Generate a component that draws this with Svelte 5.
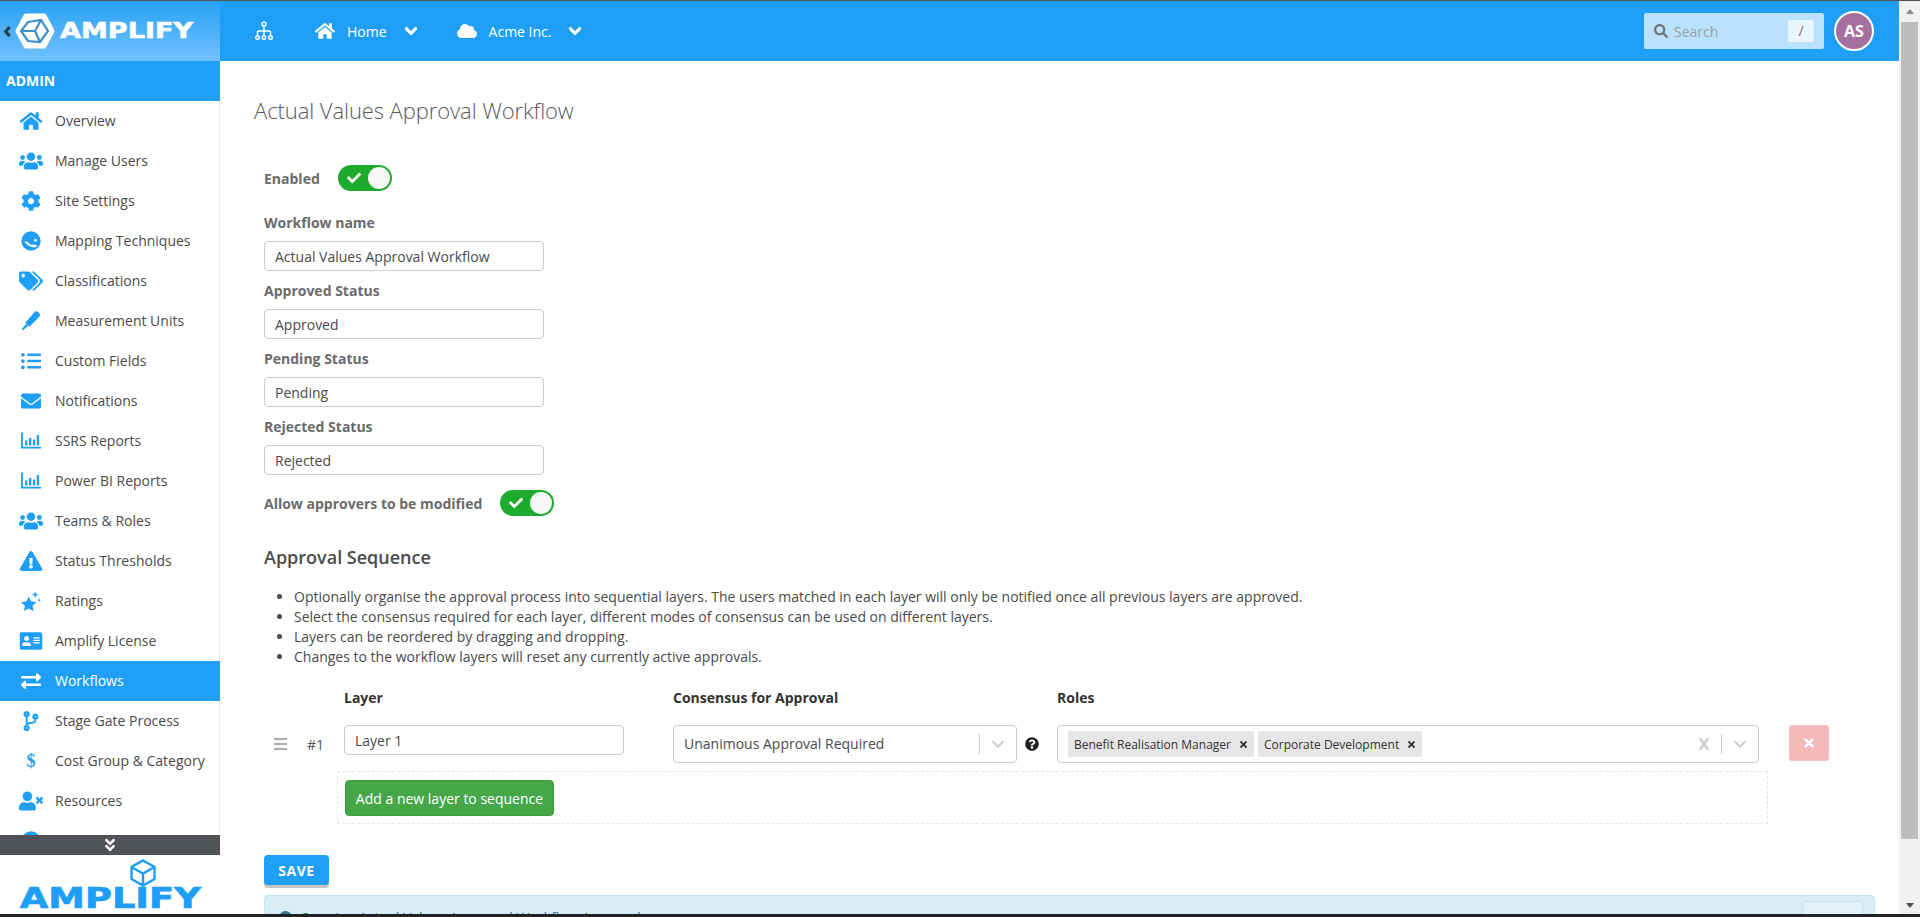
<script>
	const icons = {
		home: ['0 0 576 512', 'M280.37 148.26L96 300.11V464a16 16 0 0 0 16 16l112.06-.29a16 16 0 0 0 15.92-16V368a16 16 0 0 1 16-16h64a16 16 0 0 1 16 16v95.64a16 16 0 0 0 16 16.05L464 480a16 16 0 0 0 16-16V300L295.67 148.26a12.19 12.19 0 0 0-15.3 0zM571.6 251.47L488 182.56V44.05a12 12 0 0 0-12-12h-56a12 12 0 0 0-12 12v72.61L318.47 43a48 48 0 0 0-61 0L4.34 251.47a12 12 0 0 0-1.6 16.9l25.5 31A12 12 0 0 0 45.15 301l235.22-193.74a12.19 12.19 0 0 1 15.3 0L530.9 301a12 12 0 0 0 16.9-1.6l25.5-31a12 12 0 0 0-1.7-16.93z'],
		users: ['0 0 640 512', 'M96 224c35.3 0 64-28.7 64-64s-28.7-64-64-64-64 28.7-64 64 28.7 64 64 64zm448 0c35.3 0 64-28.7 64-64s-28.7-64-64-64-64 28.7-64 64 28.7 64 64 64zm32 32h-64c-17.6 0-33.5 7.1-45.1 18.6 40.3 22.1 68.9 62 75.1 109.4h66c17.7 0 32-14.3 32-32v-32c0-35.3-28.7-64-64-64zm-256 0c61.9 0 112-50.1 112-112S381.9 32 320 32 208 82.1 208 144s50.1 112 112 112zm76.8 32h-8.3c-20.8 10-43.9 16-68.5 16s-47.6-6-68.5-16h-8.3C179.6 288 128 339.6 128 403.2V432c0 26.5 21.5 48 48 48h288c26.5 0 48-21.5 48-48v-28.8c0-63.6-51.6-115.2-115.2-115.2zm-223.7-13.4C161.5 263.1 145.6 256 128 256H64c-35.3 0-64 28.7-64 64v32c0 17.7 14.3 32 32 32h65.9c6.3-47.4 34.9-87.3 75.2-109.4z'],
		cog: ['0 0 512 512', 'M487.4 315.7l-42.6-24.6c4.3-23.2 4.3-47 0-70.2l42.6-24.6c4.9-2.8 7.1-8.6 5.5-14-11.1-35.6-30-67.8-54.7-94.6-3.8-4.1-10-5.1-14.8-2.3L380.8 110c-17.9-15.4-38.5-27.3-60.8-35.1V25.8c0-5.6-3.9-10.5-9.4-11.7-36.7-8.2-74.3-7.8-109.2 0-5.5 1.2-9.4 6.1-9.4 11.7V75c-22.2 7.9-42.8 19.8-60.8 35.1L88.7 85.5c-4.9-2.8-11-1.9-14.8 2.3-24.7 26.7-43.6 58.9-54.7 94.6-1.7 5.4.6 11.2 5.5 14L67.3 221c-4.3 23.2-4.3 47 0 70.2l-42.6 24.6c-4.9 2.8-7.1 8.6-5.5 14 11.1 35.6 30 67.8 54.7 94.6 3.8 4.1 10 5.1 14.8 2.3l42.6-24.6c17.9 15.4 38.5 27.3 60.8 35.1v49.2c0 5.6 3.9 10.5 9.4 11.7 36.7 8.2 74.3 7.8 109.2 0 5.5-1.2 9.4-6.1 9.4-11.7v-49.2c22.2-7.9 42.8-19.8 60.8-35.1l42.6 24.6c4.9 2.8 11 1.9 14.8-2.3 24.7-26.7 43.6-58.9 54.7-94.6 1.5-5.5-.7-11.3-5.6-14.1zM256 336c-44.1 0-80-35.9-80-80s35.9-80 80-80 80 35.9 80 80-35.9 80-80 80z'],
		globe: ['0 0 512 512', 'M256 8a248 248 0 1 0 0 496 248 248 0 0 0 0-496zM90 280c30-20 70-10 100 20s60 60 100 50c30-8 60 10 90 10 25 0 35 20 12 40-30 22-70 22-110 10-60-15-122-50-192-130zM370 200a36 36 0 1 0 .1 0z'],
		tags: ['0 0 640 512', 'M497.941 225.941L286.059 14.059A48 48 0 0 0 252.118 0H48C21.49 0 0 21.49 0 48v204.118a48 48 0 0 0 14.059 33.941l211.882 211.882c18.744 18.745 49.136 18.746 67.882 0l204.118-204.118c18.745-18.745 18.745-49.137 0-67.882zM112 160c-26.51 0-48-21.49-48-48s21.49-48 48-48 48 21.49 48 48-21.49 48-48 48zm513.941 133.823L421.823 497.941c-18.745 18.745-49.137 18.745-67.882 0l-.36-.36L527.64 323.522c16.999-16.999 26.36-39.6 26.36-63.64s-9.362-46.641-26.36-63.64L331.397 0h48.721a48 48 0 0 1 33.941 14.059l211.882 211.882c18.745 18.745 18.745 49.137 0 67.882z'],
		thermo: ['0 0 24 24', 'M15.5 2a4 4 0 0 1 6 5.4L10 19l-5-5zM6 15.7l2.4 2.4-5.9 4.9-1.4-1.4z'],
		list: ['0 0 512 512', 'M48 48a48 48 0 1 0 48 48 48 48 0 0 0-48-48zm0 160a48 48 0 1 0 48 48 48 48 0 0 0-48-48zm0 160a48 48 0 1 0 48 48 48 48 0 0 0-48-48zm448 16H176a16 16 0 0 0-16 16v32a16 16 0 0 0 16 16h320a16 16 0 0 0 16-16v-32a16 16 0 0 0-16-16zm0-320H176a16 16 0 0 0-16 16v32a16 16 0 0 0 16 16h320a16 16 0 0 0 16-16V80a16 16 0 0 0-16-16zm0 160H176a16 16 0 0 0-16 16v32a16 16 0 0 0 16 16h320a16 16 0 0 0 16-16v-32a16 16 0 0 0-16-16z'],
		envelope: ['0 0 512 512', 'M502.3 190.8c3.9-3.1 9.7-.2 9.7 4.7V400c0 26.5-21.5 48-48 48H48c-26.5 0-48-21.5-48-48V195.6c0-5 5.7-7.8 9.7-4.7 22.4 17.4 52.1 39.5 154.1 113.6 21.1 15.4 56.7 47.8 92.2 47.6 35.7.3 72-32.8 92.3-47.6 102-74.1 131.6-96.3 154-113.7zM256 320c23.2.4 56.6-29.2 73.4-41.4 132.7-96.3 142.8-104.7 173.4-128.7 5.8-4.5 9.2-11.5 9.2-18.9v-19c0-26.5-21.5-48-48-48H48C21.5 64 0 85.5 0 112v19c0 7.4 3.4 14.3 9.2 18.9 30.6 23.9 40.7 32.4 173.4 128.7 16.8 12.2 50.2 41.8 73.4 41.4z'],
		chart: ['0 0 512 512', 'M0 40h48v362h464v48H0zM104 240h60v130h-60zM204 180h60v190h-60zM304 220h60v150h-60zM404 100h60v270h-60z'],
		warn: ['0 0 576 512', 'M569.517 440.013C587.975 472.007 564.806 512 527.94 512H48.054c-36.937 0-59.999-40.055-41.577-71.987L246.423 23.985c18.467-32.009 64.72-31.951 83.154 0l239.94 416.028zM288 354c-25.405 0-46 20.595-46 46s20.595 46 46 46 46-20.595 46-46-20.595-46-46-46zm-43.673-165.346l7.418 136c.347 6.364 5.609 11.346 11.982 11.346h48.546c6.373 0 11.635-4.982 11.982-11.346l7.418-136c.375-6.874-5.098-12.654-11.982-12.654h-63.383c-6.884 0-12.356 5.78-11.981 12.654z'],
		stars: ['0 0 22 22', 'M8.5 6.2l2.6 5.2 5.7.9-4.1 4 1 5.7-5.2-2.7-5.2 2.7 1-5.7-4.1-4 5.7-.9zM15.5 0l1 3 3 1-3 1-1 3-1-3-3-1 3-1zM20 8l.6 1.6 1.4.6-1.4.6-.6 1.6-.6-1.6-1.4-.6 1.4-.6z'],
		idcard: ['0 0 576 512', 'M528 32H48C21.5 32 0 53.5 0 80v352c0 26.5 21.5 48 48 48h480c26.5 0 48-21.5 48-48V80c0-26.5-21.5-48-48-48zm-352 96c35.3 0 64 28.7 64 64s-28.7 64-64 64-64-28.7-64-64 28.7-64 64-64zm112 236.8c0 10.6-10 19.2-22.4 19.2H86.4C74 384 64 375.4 64 364.8v-19.2c0-31.8 30.1-57.6 67.2-57.6h5c12.3 5.1 25.7 8 39.8 8s27.6-2.9 39.8-8h5c37.1 0 67.2 25.8 67.2 57.6v19.2zM512 312c0 4.4-3.6 8-8 8H360c-4.4 0-8-3.6-8-8v-16c0-4.4 3.6-8 8-8h144c4.4 0 8 3.6 8 8v16zm0-64c0 4.4-3.6 8-8 8H360c-4.4 0-8-3.6-8-8v-16c0-4.4 3.6-8 8-8h144c4.4 0 8 3.6 8 8v16zm0-64c0 4.4-3.6 8-8 8H360c-4.4 0-8-3.6-8-8v-16c0-4.4 3.6-8 8-8h144c4.4 0 8 3.6 8 8v16z'],
		exchange: ['0 0 512 512', 'M0 168v-16c0-13.255 10.745-24 24-24h360V80c0-21.367 25.899-32.042 40.971-16.971l80 80c9.372 9.373 9.372 24.569 0 33.941l-80 80C409.956 271.982 384 261.456 384 240v-48H24c-13.255 0-24-10.745-24-24zm488 152H128v-48c0-21.314-25.862-32.08-40.971-16.971l-80 80c-9.372 9.373-9.372 24.569 0 33.941l80 80C102.057 463.997 128 453.437 128 432v-48h360c13.255 0 24-10.745 24-24v-16c0-13.255-10.745-24-24-24z'],
		branch: ['0 0 384 512', 'M384 144c0-44.2-35.8-80-80-80s-80 35.8-80 80c0 36.4 24.3 67.1 57.5 76.8-.6 16.1-4.2 28.5-11 36.9-15.4 19.2-49.3 22.4-85.2 25.7-28.2 2.6-57.4 5.4-81.3 16.9v-144c32.5-10.2 56-40.5 56-76.3 0-44.2-35.8-80-80-80S0 35.8 0 80c0 35.8 23.5 66.1 56 76.3v199.3C23.5 365.9 0 396.2 0 432c0 44.2 35.8 80 80 80s80-35.8 80-80c0-34-21.2-63.1-51.2-74.6 3.1-5.2 7.8-9.8 14.9-13.4 16.2-8.2 40.4-10.4 66.1-12.8 42.2-3.9 90-8.4 118.2-43.4 14-17.4 21.1-39.8 21.6-67.9 31.6-10.8 54.4-40.7 54.4-75.9zM80 64c8.8 0 16 7.2 16 16s-7.2 16-16 16-16-7.2-16-16 7.2-16 16-16zm0 384c-8.8 0-16-7.2-16-16s7.2-16 16-16 16 7.2 16 16-7.2 16-16 16zm224-320c8.8 0 16 7.2 16 16s-7.2 16-16 16-16-7.2-16-16 7.2-16 16-16z'],
		usertimes: ['0 0 640 512', 'M589.6 240l45.6-45.6c6.3-6.3 6.3-16.5 0-22.8l-22.8-22.8c-6.3-6.3-16.5-6.3-22.8 0L544 194.4l-45.6-45.6c-6.3-6.3-16.5-6.3-22.8 0l-22.8 22.8c-6.3 6.3-6.3 16.5 0 22.8l45.6 45.6-45.6 45.6c-6.3 6.3-6.3 16.5 0 22.8l22.8 22.8c6.3 6.3 16.5 6.3 22.8 0l45.6-45.6 45.6 45.6c6.3 6.3 16.5 6.3 22.8 0l22.8-22.8c6.3-6.3 6.3-16.5 0-22.8L589.6 240zM224 256c70.7 0 128-57.3 128-128S294.7 0 224 0 96 57.3 96 128s57.3 128 128 128zm89.6 32h-16.7c-22.2 10.2-46.9 16-72.9 16s-50.6-5.8-72.9-16h-16.7C60.2 288 0 348.2 0 422.4V464c0 26.5 21.5 48 48 48h352c26.5 0 48-21.5 48-48v-41.6c0-74.2-60.2-134.4-134.4-134.4z'],
		circle: ['0 0 512 512', 'M256 8a248 248 0 1 0 0 496 248 248 0 0 0 0-496z'],
		cloud: ['0 0 640 512', 'M537.6 226.6c4.1-10.7 6.4-22.4 6.4-34.6 0-53-43-96-96-96-19.7 0-38.1 6-53.3 16.2C367 64.2 315.3 32 256 32c-88.4 0-160 71.6-160 160 0 2.7.1 5.4.2 8.1C40.2 219.8 0 273.2 0 336c0 79.5 64.5 144 144 144h368c70.7 0 128-57.3 128-128 0-61.9-44-113.6-102.4-125.4z'],
		search: ['0 0 512 512', 'M505 442.7L405.3 343c-4.5-4.5-10.6-7-17-7H372c27.6-35.3 44-79.7 44-128C416 93.1 322.9 0 208 0S0 93.1 0 208s93.1 208 208 208c48.3 0 92.7-16.4 128-44v16.3c0 6.4 2.5 12.5 7 17l99.7 99.7c9.4 9.4 24.6 9.4 33.9 0l28.3-28.3c9.4-9.4 9.4-24.6.1-34zM208 336c-70.7 0-128-57.2-128-128 0-70.7 57.2-128 128-128 70.7 0 128 57.2 128 128 0 70.7-57.2 128-128 128z'],
		chevron: ['0 0 448 512', 'M207.029 381.476L12.686 187.132c-9.373-9.373-9.373-24.569 0-33.941l22.667-22.667c9.357-9.357 24.522-9.375 33.901-.04L224 284.505l154.745-154.021c9.379-9.335 24.544-9.317 33.901.04l22.667 22.667c9.373 9.373 9.373 24.569 0 33.941L240.971 381.476c-9.373 9.372-24.569 9.372-33.942 0z'],
		check: ['0 0 512 512', 'M173.898 439.404l-166.4-166.4c-9.997-9.997-9.997-26.206 0-36.204l36.203-36.204c9.997-9.998 26.207-9.998 36.204 0L192 312.69 432.095 72.596c9.997-9.997 26.207-9.997 36.204 0l36.203 36.204c9.997 9.997 9.997 26.206 0 36.204l-294.4 294.401c-9.998 9.997-26.207 9.997-36.204-.001z'],
		times: ['0 0 352 512', 'M242.72 256l100.07-100.07c12.28-12.28 12.28-32.19 0-44.48l-22.24-22.24c-12.28-12.28-32.19-12.28-44.48 0L176 189.28 75.93 89.21c-12.28-12.28-32.19-12.28-44.48 0L9.21 111.45c-12.28 12.28-12.28 32.19 0 44.48L109.28 256 9.21 356.07c-12.28 12.28-12.28 32.19 0 44.48l22.24 22.24c12.28 12.28 32.2 12.28 44.48 0L176 322.72l100.07 100.07c12.28 12.28 32.2 12.28 44.48 0l22.24-22.24c12.28-12.28 12.28-32.19 0-44.48L242.72 256z'],
		question: ['0 0 512 512', 'M504 256c0 136.997-111.043 248-248 248S8 392.997 8 256C8 119.083 119.043 8 256 8s248 111.083 248 248zM262.655 90c-54.497 0-89.255 22.957-116.549 63.758-3.536 5.286-2.353 12.415 2.715 16.258l34.699 26.31c5.205 3.947 12.621 3.008 16.665-2.122 17.864-22.658 30.113-35.797 57.303-35.797 20.429 0 45.698 13.148 45.698 32.958 0 14.976-12.363 22.667-32.534 33.976C247.128 238.528 216 254.941 216 296v4c0 6.627 5.373 12 12 12h56c6.627 0 12-5.373 12-12v-1.333c0-28.462 83.186-29.647 83.186-106.667 0-58.002-60.165-102-116.531-102zM256 338c-25.365 0-46 20.635-46 46 0 25.364 20.635 46 46 46s46-20.636 46-46c0-25.365-20.635-46-46-46z'],
		doubledown: ['0 0 320 512', 'M143 256.3L7 120.3c-9.4-9.4-9.4-24.6 0-33.9l22.6-22.6c9.4-9.4 24.6-9.4 33.9 0l96.4 96.4 96.4-96.4c9.4-9.4 24.6-9.4 33.9 0L313 86.3c9.4 9.4 9.4 24.6 0 33.9l-136 136c-9.4 9.5-24.6 9.5-34 .1zm34 192l136-136c9.4-9.4 9.4-24.6 0-33.9l-22.6-22.6c-9.4-9.4-24.6-9.4-33.9 0L160 352.1l-96.4-96.4c-9.4-9.4-24.6-9.4-33.9 0L7 278.3c-9.4 9.4-9.4 24.6 0 33.9l136 136c9.4 9.5 24.6 9.5 34 .1z']
	};

	const navItems = [
		{ label: 'Overview', icon: 'home' },
		{ label: 'Manage Users', icon: 'users' },
		{ label: 'Site Settings', icon: 'cog' },
		{ label: 'Mapping Techniques', icon: 'globe' },
		{ label: 'Classifications', icon: 'tags' },
		{ label: 'Measurement Units', icon: 'thermo' },
		{ label: 'Custom Fields', icon: 'list' },
		{ label: 'Notifications', icon: 'envelope' },
		{ label: 'SSRS Reports', icon: 'chart' },
		{ label: 'Power BI Reports', icon: 'chart' },
		{ label: 'Teams & Roles', icon: 'users' },
		{ label: 'Status Thresholds', icon: 'warn' },
		{ label: 'Ratings', icon: 'stars' },
		{ label: 'Amplify License', icon: 'idcard' },
		{ label: 'Workflows', icon: 'exchange', active: true },
		{ label: 'Stage Gate Process', icon: 'branch' },
		{ label: 'Cost Group & Category', dollar: true },
		{ label: 'Resources', icon: 'usertimes' },
		{ label: '', icon: 'circle' }
	];

	const statusFields = [
		{ label: 'Workflow name', value: 'Actual Values Approval Workflow' },
		{ label: 'Approved Status', value: 'Approved' },
		{ label: 'Pending Status', value: 'Pending' },
		{ label: 'Rejected Status', value: 'Rejected' }
	];

	const notes = [
		'Optionally organise the approval process into sequential layers. The users matched in each layer will only be notified once all previous layers are approved.',
		'Select the consensus required for each layer, different modes of consensus can be used on different layers.',
		'Layers can be reordered by dragging and dropping.',
		'Changes to the workflow layers will reset any currently active approvals.'
	];

	const roles = ['Benefit Realisation Manager', 'Corporate Development'];
</script>

{#snippet icon(name)}
	<svg viewBox={icons[name][0]} aria-hidden="true"><path d={icons[name][1]} fill-rule="evenodd" /></svg>
{/snippet}

{#snippet toggle()}
	<span class="toggle">
		<span class="toggle-check">{@render icon('check')}</span>
		<span class="toggle-knob"></span>
	</span>
{/snippet}

<div class="page">
	<div class="edge-top"></div>
	<div class="frame">
		<div class="app">
			<header class="topbar">
				<div class="brand">
					<span class="brand-back">‹</span>
					<svg class="brand-mark" viewBox="0 0 40 36" aria-hidden="true">
						<path class="hex" d="M11 3h18l8 15-8 15H11L3 18z" />
						<path class="cube" d="M13 9l13-2 7 11-8 11-12-1-7-10zM20 18l6-11M20 18H6M20 18l5 11" />
					</svg>
					<span class="brand-word">AMPLIFY</span>
				</div>
				<nav class="topnav">
					<svg class="sitemap" viewBox="0 0 18 20" aria-hidden="true">
						<circle cx="9" cy="3" r="2" />
						<path d="M9 5v9M9 10H3.5a1 1 0 0 0-1 1v3M9 10h5.5a1 1 0 0 1 1 1v3" />
						<circle cx="2.5" cy="16.5" r="1.8" />
						<circle cx="9" cy="16.5" r="1.8" />
						<circle cx="15.5" cy="16.5" r="1.8" />
					</svg>
					<span class="crumb crumb-home">
						{@render icon('home')}
						<span class="crumb-text">Home</span>
						<span class="crumb-chev">{@render icon('chevron')}</span>
					</span>
					<span class="crumb">
						{@render icon('cloud')}
						<span class="crumb-text">Acme Inc.</span>
						<span class="crumb-chev">{@render icon('chevron')}</span>
					</span>
				</nav>
				<div class="search">
					{@render icon('search')}
					<span class="search-text">Search</span>
					<span class="search-key">/</span>
				</div>
				<div class="avatar">AS</div>
			</header>

			<div class="body">
				<aside class="sidebar">
					<div class="admin">ADMIN</div>
					<ul class="nav">
						{#each navItems as item}
							<li class="nav-item" class:active={item.active}>
								<span class="nav-icon">
									{#if item.dollar}
										<span class="dollar">$</span>
									{:else}
										{@render icon(item.icon)}
									{/if}
								</span>
								<span class="nav-label">{item.label}</span>
							</li>
						{/each}
					</ul>
					<div class="more">{@render icon('doubledown')}</div>
					<div class="side-logo">
						<svg viewBox="0 0 26 28" aria-hidden="true">
							<path d="M13 1.5L24.5 8v12L13 26.5 1.5 20V8zM1.5 8L13 14.5 24.5 8M13 14.5v12" />
						</svg>
						<span class="side-word">AMPLIFY</span>
					</div>
				</aside>

				<main class="main">
					<h1>Actual Values Approval Workflow</h1>
					<div class="form">
						<div class="switch-row">
							<span class="field-label">Enabled</span>
							{@render toggle()}
						</div>
						<div class="fields">
							{#each statusFields as field}
								<label class="field">
									<span class="field-label">{field.label}</span>
									<input type="text" value={field.value} readonly />
								</label>
							{/each}
						</div>
						<div class="switch-row allow">
							<span class="field-label">Allow approvers to be modified</span>
							{@render toggle()}
						</div>

						<h2>Approval Sequence</h2>
						<ul class="notes">
							{#each notes as note}
								<li>{note}</li>
							{/each}
						</ul>

						<div class="layers">
							<div class="col-head col-layer">Layer</div>
							<div class="col-head col-consensus">Consensus for Approval</div>
							<div class="col-head col-roles">Roles</div>

							<div class="handle">
								<span class="bars"><i></i><i></i><i></i></span>
								<span class="layer-no">#1</span>
							</div>
							<input class="col-layer layer-input" type="text" value="Layer 1" readonly />
							<div class="select col-consensus">
								<span class="select-value">Unanimous Approval Required</span>
								<span class="select-sep"></span>
								<svg class="select-chev" viewBox="0 0 20 20" aria-hidden="true"><path d="M4 7l6 6 6-6" /></svg>
							</div>
							<div class="help">{@render icon('question')}</div>
							<div class="select col-roles">
								<div class="chips">
									{#each roles as role}
										<span class="chip">{role}<span class="chip-x">{@render icon('times')}</span></span>
									{/each}
								</div>
								<svg class="select-clear" viewBox="0 0 20 20" aria-hidden="true"><path d="M5 3l10 14M15 3L5 17" /></svg>
								<span class="select-sep"></span>
								<svg class="select-chev" viewBox="0 0 20 20" aria-hidden="true"><path d="M4 7l6 6 6-6" /></svg>
							</div>
							<button class="delete" type="button">{@render icon('times')}</button>
						</div>

						<div class="add-zone">
							<button class="add" type="button">Add a new layer to sequence</button>
						</div>

						<button class="save" type="button">SAVE</button>

						<div class="alert">
							<span class="alert-icon"></span>
							<span class="alert-text">Ongoing Actual Values Approved Workflow Approvals</span>
							<button class="alert-btn" type="button">Show all</button>
						</div>
					</div>
				</main>
			</div>
		</div>

		<div class="scrollbar">
			<span class="arrow up"></span>
			<span class="thumb"></span>
			<span class="arrow down"></span>
		</div>
	</div>
	<div class="edge-bottom"></div>
</div>

<style>
	:global(body) {
		margin: 0;
		overflow: hidden;
		font-family: 'Open Sans', 'Liberation Sans', sans-serif;
		font-size: 14px;
		color: #4a4a4a;
	}

	.page {
		height: 917px;
		display: flex;
		flex-direction: column;
		overflow: hidden;
	}

	.edge-top {
		height: 1px;
		background: #4f5256;
		flex: none;
	}

	.edge-bottom {
		height: 3px;
		background: #232323;
		flex: none;
	}

	.frame {
		flex: 1;
		min-height: 0;
		display: flex;
	}

	.app {
		flex: 1;
		min-width: 0;
		display: flex;
		flex-direction: column;
	}

	/* top bar */
	.topbar {
		height: 60px;
		flex: none;
		display: flex;
		align-items: center;
		background: #1e9ff5;
		color: #fff;
	}

	.brand {
		width: 220px;
		height: 100%;
		flex: none;
		display: flex;
		align-items: center;
		background: linear-gradient(#27a1f4, #72c1fd);
	}

	.brand-back {
		width: 15px;
		padding-left: 3px;
		box-sizing: border-box;
		font-size: 24px;
		line-height: 24px;
		font-weight: 700;
		color: #2b3a47;
		margin-top: -4px;
	}

	.brand-mark {
		width: 40px;
		height: 36px;
		flex: none;
	}

	.hex {
		fill: #fff;
		stroke: #fff;
		stroke-width: 5;
		stroke-linejoin: round;
	}

	.cube {
		fill: none;
		stroke: #3f8fca;
		stroke-width: 2.2;
	}

	.brand-word {
		display: inline-block;
		margin-left: 5px;
		font-family: 'DejaVu Sans', sans-serif;
		font-weight: 700;
		font-size: 22px;
		line-height: 22px;
		-webkit-text-stroke: 0.6px #fff;
		transform: scaleX(1.23);
		transform-origin: left center;
	}

	.topnav {
		flex: 1;
		display: flex;
		align-items: center;
		padding-left: 35px;
	}

	.sitemap {
		width: 18px;
		height: 20px;
		fill: none;
		stroke: #fff;
		stroke-width: 1.4;
		margin-right: 42px;
	}

	.crumb {
		display: flex;
		align-items: center;
	}

	.crumb-home {
		margin-right: 40px;
	}

	.crumb :global(svg) {
		fill: #fff;
	}

	.crumb > :global(svg) {
		width: 20px;
		height: 18px;
	}

	.crumb-text {
		margin-left: 12px;
		margin-right: 18px;
	}

	.crumb-chev {
		display: flex;
	}

	.crumb-chev :global(svg) {
		width: 12px;
		height: 14px;
		stroke: #fff;
		stroke-width: 40;
	}

	.search {
		width: 180px;
		height: 36px;
		box-sizing: border-box;
		padding: 0 10px;
		display: flex;
		align-items: center;
		background: #bbe2fc;
		border-radius: 2px;
		margin-right: 10px;
	}

	.search :global(svg) {
		width: 14px;
		height: 14px;
		fill: #6e7478;
	}

	.search-text {
		flex: 1;
		margin-left: 6px;
		color: #95a0a6;
	}

	.search-key {
		width: 26px;
		height: 22px;
		line-height: 22px;
		text-align: center;
		background: #e9f6fe;
		border-radius: 2px;
		color: #777;
	}

	.avatar {
		width: 40px;
		height: 40px;
		box-sizing: border-box;
		border: 2px solid #fff;
		border-radius: 50%;
		margin-right: 25px;
		background: #a5709f;
		color: #fff;
		font-weight: 700;
		font-size: 16px;
		line-height: 36px;
		text-align: center;
	}

	/* sidebar */
	.body {
		flex: 1;
		min-height: 0;
		display: flex;
	}

	.sidebar {
		width: 220px;
		flex: none;
		display: flex;
		flex-direction: column;
		min-height: 0;
		box-sizing: border-box;
	}

	.admin {
		height: 40px;
		flex: none;
		padding-left: 6px;
		line-height: 40px;
		background: #1e9ff5;
		color: #fff;
		font-weight: 700;
	}

	.nav {
		list-style: none;
		margin: 0;
		padding: 0;
		height: 734px;
		flex: none;
		overflow: hidden;
	}

	.nav-item {
		height: 40px;
		box-sizing: border-box;
		display: flex;
		align-items: center;
		padding-left: 19px;
		border-right: 1px solid #eee;
	}

	.nav-item.active {
		background: #1e9ff5;
		color: #fff;
		border-right: 0;
	}

	.nav-label {
		margin-top: -2px;
	}

	.nav-icon {
		width: 24px;
		height: 20px;
		margin-right: 12px;
		display: flex;
		justify-content: center;
		align-items: center;
		flex: none;
	}

	.nav-icon :global(svg) {
		width: 24px;
		height: 20px;
		fill: #1e9ff5;
	}

	.active .nav-icon :global(svg) {
		fill: #fff;
	}

	.dollar {
		font-family: 'Liberation Serif', serif;
		font-weight: 700;
		font-size: 18px;
		color: #1e9ff5;
	}

	.more {
		height: 20px;
		flex: none;
		background: #4f5357;
		display: flex;
		align-items: center;
		justify-content: center;
	}

	.more :global(svg) {
		width: 14px;
		height: 16px;
		fill: #fff;
	}

	.side-logo {
		flex: 1;
		display: flex;
		flex-direction: column;
		align-items: center;
		padding-top: 4px;
		overflow: hidden;
	}

	.side-logo svg {
		width: 26px;
		height: 28px;
		flex: none;
		fill: none;
		stroke: #1e9ff5;
		stroke-width: 2.4;
		margin-left: 66px;
	}

	.side-word {
		display: block;
		margin-top: -2px;
		font-family: 'DejaVu Sans', sans-serif;
		font-weight: 700;
		font-size: 29px;
		line-height: 27px;
		color: #1e9ff5;
		-webkit-text-stroke: 0.7px #1e9ff5;
		transform: scaleX(1.27);
	}

	/* main */
	.main {
		flex: 1;
		min-width: 0;
		overflow: hidden;
		padding: 34px 24px 0 34px;
	}

	h1 {
		margin: 0;
		font-size: 22px;
		line-height: 30px;
		font-weight: 300;
		color: #5a5a5a;
		letter-spacing: -0.08px;
	}

	.form {
		margin: 40px 0 0 10px;
	}

	.switch-row {
		display: flex;
		align-items: center;
		gap: 18px;
	}

	.switch-row .field-label {
		margin-top: 2px;
	}

	.allow {
		margin-top: 15px;
	}

	.field-label {
		font-weight: 700;
		color: #6b6b6b;
		line-height: 20px;
	}

	.toggle {
		width: 54px;
		height: 26px;
		box-sizing: border-box;
		padding: 2px;
		border-radius: 13px;
		background: #1dab2e;
		display: flex;
		align-items: center;
		justify-content: space-between;
	}

	.toggle-check {
		display: flex;
		margin-left: 7px;
	}

	.toggle-check :global(svg) {
		width: 14px;
		height: 14px;
		fill: #fff;
	}

	.toggle-knob {
		width: 22px;
		height: 22px;
		border-radius: 50%;
		background: #f7f7f7;
	}

	.fields {
		margin-top: 22px;
	}

	.field {
		display: block;
		margin-bottom: 10px;
	}

	.field:last-child {
		margin-bottom: 0;
	}

	.field .field-label {
		display: block;
		margin-bottom: 8px;
	}

	input {
		display: block;
		width: 280px;
		height: 30px;
		box-sizing: border-box;
		padding: 0 10px;
		border: 1px solid #ccc;
		border-radius: 4px;
		font: inherit;
		color: #4a4a4a;
		outline: none;
		background: #fff;
	}

	h2 {
		margin: 29px 0 0;
		font-size: 18px;
		line-height: 24px;
		font-weight: 600;
		color: #4a4a4a;
	}

	.notes {
		margin: 18px 0 0;
		padding: 0 0 0 30px;
		line-height: 20px;
	}

	.layers {
		margin-top: 21px;
		display: grid;
		grid-template-columns: 80px 280px 49px 344px 40px 702px 30px 40px;
		row-gap: 17px;
		align-items: start;
	}

	.col-head {
		font-weight: 700;
		line-height: 20px;
		color: #333;
		grid-row: 1;
	}

	.col-layer {
		grid-column: 2;
	}

	.col-consensus {
		grid-column: 4;
	}

	.col-roles {
		grid-column: 6;
	}

	.handle {
		grid-column: 1;
		grid-row: 2;
		height: 38px;
		display: flex;
		align-items: center;
		padding-left: 10px;
		color: #555;
	}

	.bars {
		width: 13px;
		margin-right: 20px;
		display: flex;
		flex-direction: column;
		gap: 3px;
	}

	.bars i {
		height: 2px;
		background: #aaa;
	}

	.layer-input,
	.select,
	.help,
	.delete {
		grid-row: 2;
	}

	.select {
		height: 38px;
		box-sizing: border-box;
		border: 1px solid #ccc;
		border-radius: 4px;
		display: flex;
		align-items: center;
		padding-right: 9px;
	}

	.select-value {
		flex: 1;
		padding-left: 10px;
		margin-top: -2px;
	}

	.select-sep {
		width: 1px;
		height: 20px;
		background: #ccc;
		margin: 0 9px;
	}

	.select-chev,
	.select-clear {
		width: 18px;
		height: 18px;
		fill: none;
		stroke: #ccc;
		stroke-width: 2.2;
	}

	.select-clear {
		width: 16px;
		height: 16px;
		stroke-width: 2.8;
	}

	.chips {
		flex: 1;
		display: flex;
		gap: 4px;
		padding-left: 10px;
	}

	.chip {
		height: 26px;
		display: flex;
		align-items: center;
		padding: 0 7px 0 6px;
		border-radius: 2px;
		background: #e6e6e6;
		font-size: 12px;
		color: #333;
	}

	.chip-x {
		display: flex;
		margin-left: 9px;
	}

	.chip-x :global(svg) {
		width: 7px;
		height: 11px;
		fill: #333;
	}

	.help {
		grid-column: 5;
		height: 38px;
		padding-left: 8px;
		display: flex;
		align-items: center;
	}

	.help :global(svg) {
		width: 14px;
		height: 14px;
		fill: #222;
	}

	.delete {
		grid-column: 8;
		width: 40px;
		height: 36px;
		padding: 0;
		border: 1px solid #f3c0c0;
		border-radius: 3px;
		background: #f5b9b9;
	}

	.delete :global(svg) {
		width: 10px;
		height: 14px;
		fill: #fff;
		display: block;
		margin: 0 auto;
	}

	.add-zone {
		width: 1431px;
		height: 53px;
		box-sizing: border-box;
		margin: 8px 0 0 73px;
		padding: 8px 7px 0;
		border: 1px dashed #e6e6e6;
	}

	.add {
		display: block;
		width: 209px;
		height: 36px;
		padding: 0;
		border: 1px solid #3d9a40;
		border-radius: 4px;
		background: #46a748;
		color: #fff;
		font: inherit;
	}

	.save {
		display: block;
		width: 65px;
		height: 30px;
		margin-top: 31px;
		padding: 0;
		border: 0;
		border-radius: 4px;
		background: #1e9ff5;
		box-shadow: 0 3px 0 #c4c4c4;
		color: #fff;
		font: inherit;
		font-weight: 700;
		letter-spacing: 0.5px;
	}

	.alert {
		position: relative;
		margin-top: 10px;
		height: 52px;
		box-sizing: border-box;
		border: 1px solid #bce4f1;
		border-radius: 4px;
		background: #d9edf7;
		padding: 12px 14px;
		display: flex;
		align-items: flex-start;
		line-height: 20px;
		color: #31708f;
	}

	.alert-icon {
		width: 13px;
		height: 13px;
		margin: 3px 8px 0 0;
		border-radius: 50%;
		background: #31708f;
	}

	.alert-text {
		flex: 1;
	}

	.alert-btn {
		position: absolute;
		top: 5px;
		right: 11px;
		width: 60px;
		height: 36px;
		padding: 0;
		border: 1px solid #bce4f1;
		border-radius: 3px;
		background: #e4f3fa;
		font: inherit;
		font-size: 13px;
		color: #555;
	}

	/* window scrollbar */
	.scrollbar {
		width: 21px;
		flex: none;
		display: flex;
		flex-direction: column;
		align-items: center;
		background: #f1f1f1;
		padding: 8px 0 6px;
		box-sizing: border-box;
	}

	.arrow {
		width: 0;
		height: 0;
		border-left: 4px solid transparent;
		border-right: 4px solid transparent;
	}

	.arrow.up {
		border-bottom: 5px solid #8a8a8a;
	}

	.arrow.down {
		margin-top: auto;
		border-top: 5px solid #505050;
	}

	.thumb {
		width: 17px;
		height: 817px;
		margin-top: 8px;
		background: #bdbdbd;
	}
</style>
